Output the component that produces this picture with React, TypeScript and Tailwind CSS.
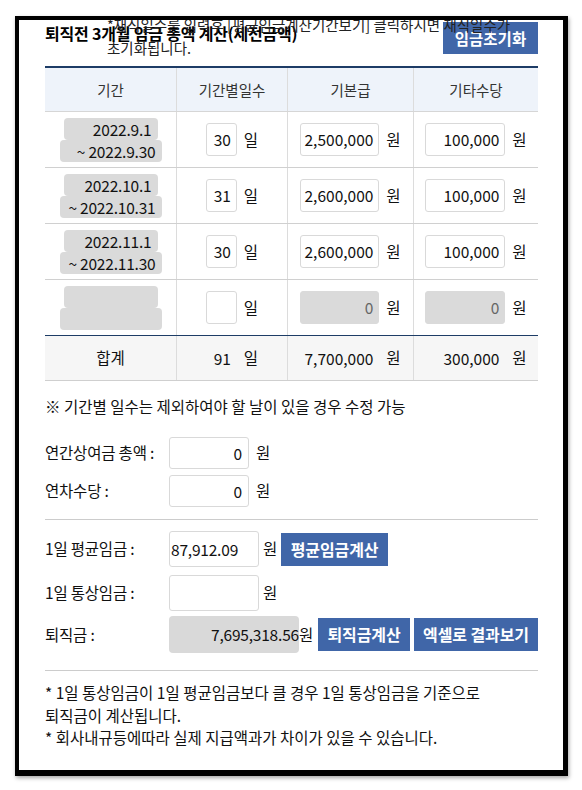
import React from "react";

const FONT = "font-['Noto_Sans_CJK_KR','Noto_Sans',sans-serif]";

function Period({ a, b }: { a?: string; b?: string }) {
  return (
    <div className="flex flex-col items-center">
      <div className="w-[94px] h-[22px] bg-[#dadada] rounded-[4px] text-right pr-[6px] text-[15.5px] leading-[22px] tracking-[-0.2px]">
        {a}
      </div>
      <div className="w-[102px] h-[22px] bg-[#dadada] rounded-[4px] text-right pr-[6px] text-[15.5px] leading-[22px] tracking-[-0.2px]">
        {b}
      </div>
    </div>
  );
}

function Box({
  w,
  v,
  unit,
  gray,
  plain,
}: {
  w: string;
  v?: string;
  unit: string;
  gray?: boolean;
  plain?: boolean;
}) {
  const base =
    "h-[33px] rounded-[3px] text-right pr-[5px] text-[15.5px] leading-[31px] tracking-[0px]";
  const look = plain
    ? "border border-transparent"
    : gray
    ? "bg-[#dadada] border border-[#dadada] text-[#666]"
    : "bg-white border border-[#d9d9d9]";
  return (
    <div className="flex items-center justify-center gap-[7px]">
      <div className={`${w} ${base} ${look}`}>{v}</div>
      <span className="text-[15.5px]">{unit}</span>
    </div>
  );
}

const cell = "flex items-center justify-center border-r border-[#dcdcdc]";
const cellLast = "flex items-center justify-center";

function Row({
  a,
  b,
  d,
  p,
  o,
  last,
}: {
  a?: string;
  b?: string;
  d?: string;
  p?: string;
  o?: string;
  last?: boolean;
}) {
  const empty = !a;
  return (
    <div
      className={`grid grid-cols-[132px_111px_126px_124px] h-[56px] border-b ${
        last ? "border-[#1d3c66]" : "border-[#d0d0d0]"
      }`}
    >
      <div className={cell}>
        <Period a={a} b={b} />
      </div>
      <div className={cell}>
        <Box w="w-[31px]" v={d} unit="일" />
      </div>
      <div className={cell}>
        <Box w="w-[79px]" v={empty ? "0" : p} unit="원" gray={empty} />
      </div>
      <div className={cellLast}>
        <Box w="w-[80px]" v={empty ? "0" : o} unit="원" gray={empty} />
      </div>
    </div>
  );
}

function Btn({ children, w }: { children: React.ReactNode; w: string }) {
  return (
    <div
      className={`${w} h-[33px] bg-[#4066a8] text-white font-bold text-[16px] leading-[33px] text-center tracking-[-0.1px] whitespace-nowrap`}
    >
      {children}
    </div>
  );
}

export default function App() {
  return (
    <div className={`w-[582px] h-[790px] bg-white pt-[16px] pl-[15px] ${FONT} text-[#111]`}>
      <div className="relative w-[553px] h-[760px] border-black border-l-4 border-t-4 border-r-[5px] border-b-[6px] shadow-[1px_2px_4px_rgba(0,0,0,0.35)] overflow-hidden bg-white">
        <div className="pl-[26px] pr-[25px] pt-[2px]">
          {/* header */}
          <div className="relative flex items-start justify-between h-[32px]">
            <div className="text-[16px] font-bold leading-[22px] tracking-[-0.2px] text-black whitespace-nowrap">
              퇴직전 3개월 임금 총액 계산(세전금액)
            </div>
            <div className="w-[95px] h-[32px] bg-[#4066a8] text-white font-bold text-[15.5px] leading-[32px] text-center tracking-[0px]">
              임금초기화
            </div>
            <div className="absolute z-10 left-[62px] top-[-9px] text-[14.5px] leading-[23px] tracking-[0px] text-[#222] whitespace-nowrap">
              *재직일수를 입력후 [평균임금계산기간보기] 클릭하시면 재직일수가
              <br />
              초기화됩니다.
            </div>
          </div>

          {/* table */}
          <div className="mt-[12px] border-t-2 border-[#1d3c66]">
            <div className="grid grid-cols-[132px_111px_126px_124px] h-[44px] bg-[#eef3fa] border-b border-[#d6d6d6] text-[14.5px] text-[#333]">
              <div className={cell}>기간</div>
              <div className={cell}>기간별일수</div>
              <div className={cell}>기본급</div>
              <div className={cellLast}>기타수당</div>
            </div>
            <Row a="2022.9.1" b="~ 2022.9.30" d="30" p="2,500,000" o="100,000" />
            <Row a="2022.10.1" b="~ 2022.10.31" d="31" p="2,600,000" o="100,000" />
            <Row a="2022.11.1" b="~ 2022.11.30" d="30" p="2,600,000" o="100,000" />
            <Row last />
            <div className="grid grid-cols-[132px_111px_126px_124px] h-[45px] bg-[#f6f6f6] border-b border-[#cfcfcf]">
              <div className={`${cell} text-[15.5px]`}>합계</div>
              <div className={cell}>
                <Box w="w-[31px]" v="91" unit="일" plain />
              </div>
              <div className={cell}>
                <Box w="w-[79px]" v="7,700,000" unit="원" plain />
              </div>
              <div className={cellLast}>
                <Box w="w-[80px]" v="300,000" unit="원" plain />
              </div>
            </div>
          </div>

          <div className="mt-[14px] text-[15.5px] leading-[22px] tracking-[0px]">
            ※ 기간별 일수는 제외하여야 할 날이 있을 경우 수정 가능
          </div>

          {/* form */}
          <div className="mt-[20px] flex items-center h-[32px] text-[15.5px] tracking-[-0.2px]">
            <span className="w-[124px] whitespace-nowrap">연간상여금 총액 :</span>
            <div className="w-[80px] h-[32px] bg-white border border-[#d9d9d9] rounded-[3px] text-right pr-[6px] leading-[30px]">
              0
            </div>
            <span className="ml-[7px]">원</span>
          </div>
          <div className="mt-[6px] flex items-center h-[32px] text-[15.5px] tracking-[-0.2px]">
            <span className="w-[124px]">연차수당 :</span>
            <div className="w-[80px] h-[32px] bg-white border border-[#d9d9d9] rounded-[3px] text-right pr-[6px] leading-[30px]">
              0
            </div>
            <span className="ml-[7px]">원</span>
          </div>

          <div className="mt-[12px] h-px bg-[#cccccc]" />

          <div className="mt-[11px] flex items-center h-[36px] text-[15.5px] tracking-[-0.2px]">
            <span className="w-[124px]">1일 평균임금 :</span>
            <div className="w-[90px] h-[36px] bg-white border border-[#d9d9d9] rounded-[3px] text-left pl-[1px] leading-[34px]">
              87,912.09
            </div>
            <span className="ml-[4px]">원</span>
            <div className="ml-[4px]">
              <Btn w="w-[107px]">평균임금계산</Btn>
            </div>
          </div>
          <div className="mt-[8px] flex items-center h-[36px] text-[15.5px] tracking-[-0.2px]">
            <span className="w-[124px]">1일 통상임금 :</span>
            <div className="w-[90px] h-[36px] bg-white border border-[#d9d9d9] rounded-[3px]" />
            <span className="ml-[4px]">원</span>
          </div>
          <div className="mt-[5px] flex items-center h-[37px] text-[15.5px] tracking-[-0.2px]">
            <span className="w-[124px]">퇴직금 :</span>
            <div className="w-[130px] h-[37px] bg-[#d9d9d9] rounded-[4px] text-right leading-[37px]">
              7,695,318.56
            </div>
            <span>원</span>
            <div className="ml-[5px]">
              <Btn w="w-[92px]">퇴직금계산</Btn>
            </div>
            <div className="ml-[4px]">
              <Btn w="w-[124px]">엑셀로 결과보기</Btn>
            </div>
          </div>

          <div className="mt-[17px] h-px bg-[#cccccc]" />

          <div className="mt-[10px] text-[15.5px] leading-[22.5px] tracking-[0px] text-[#111]">
            * 1일 통상임금이 1일 평균임금보다 클 경우 1일 통상임금을 기준으로
            <br />
            퇴직금이 계산됩니다.
            <br />* 회사내규등에따라 실제 지급액과가 차이가 있을 수 있습니다.
          </div>
        </div>
      </div>
    </div>
  );
}
